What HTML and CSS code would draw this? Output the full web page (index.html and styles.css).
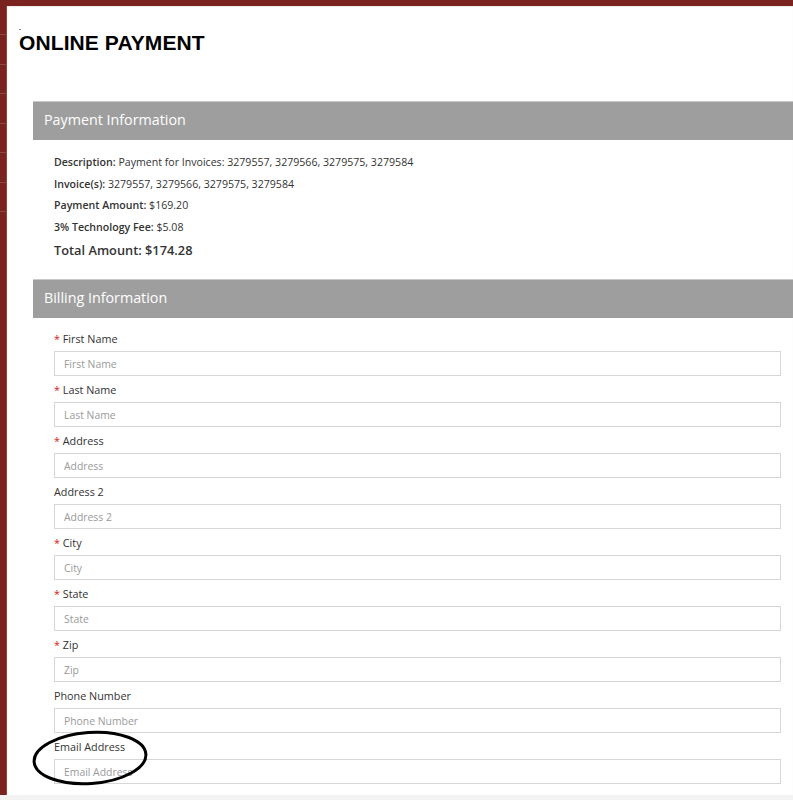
FILE: index.html
```html
<!DOCTYPE html>
<html>
<head>
<meta charset="utf-8">
<link rel="stylesheet" href="styles.css">
</head>
<body>
<div class="page">
  <div class="side"></div>
  <div class="main">
    <div class="mark"></div>
    <h1 class="title">ONLINE PAYMENT</h1>

    <div class="bar">Payment Information</div>
    <div class="info">
      <div class="line"><b>Description:</b> Payment for Invoices: 3279557, 3279566, 3279575, 3279584</div>
      <div class="line"><b>Invoice(s):</b> 3279557, 3279566, 3279575, 3279584</div>
      <div class="line"><b>Payment Amount:</b> $169.20</div>
      <div class="line"><b>3% Technology Fee:</b> $5.08</div>
      <div class="total">Total Amount: $174.28</div>
    </div>

    <div class="bar">Billing Information</div>
    <form class="form">
      <div class="field"><label class="label"><span class="req">*</span> First Name</label><input class="input" placeholder="First Name"></div>
      <div class="field"><label class="label"><span class="req">*</span> Last Name</label><input class="input" placeholder="Last Name"></div>
      <div class="field"><label class="label"><span class="req">*</span> Address</label><input class="input" placeholder="Address"></div>
      <div class="field"><label class="label">Address 2</label><input class="input" placeholder="Address 2"></div>
      <div class="field"><label class="label"><span class="req">*</span> City</label><input class="input" placeholder="City"></div>
      <div class="field"><label class="label"><span class="req">*</span> State</label><input class="input" placeholder="State"></div>
      <div class="field"><label class="label"><span class="req">*</span> Zip</label><input class="input" placeholder="Zip"></div>
      <div class="field"><label class="label">Phone Number</label><input class="input" placeholder="Phone Number"></div>
      <div class="field"><label class="label">Email Address</label><input class="input" placeholder="Email Address"></div>
    </form>
  </div>
</div>
<svg class="circle" width="130" height="64" viewBox="0 0 130 64">
  <ellipse cx="65" cy="32" rx="56" ry="25.5" fill="none" stroke="#000" stroke-width="3" transform="rotate(-4 65 32)"/>
</svg>
</body>
</html>
```

FILE: styles.css
```css
html, body {
  margin: 0;
  padding: 0;
}
body {
  background: #f3f3f3;
  width: 793px;
  height: 800px;
  overflow: hidden;
  position: relative;
}
.page {
  display: flex;
  height: 789px;
  border-top: 6px solid #7b2320;
}
.side {
  width: 7px;
  flex: none;
  background-color: #7b2320;
  background-image: repeating-linear-gradient(to bottom, transparent 0, transparent 28.5px, rgba(255,255,255,0.16) 28.5px, rgba(255,255,255,0.16) 29.5px);
  background-size: 7px 208px;
  background-repeat: no-repeat;
  border-right: 1px solid #8e4444;
  box-sizing: border-box;
}
.main {
  flex: 1;
  background: #fff;
  padding-top: 23px;
  overflow: hidden;
  box-shadow: inset 0 1px 1px rgba(0,0,0,0.08);
}
.mark {
  width: 2px;
  height: 1px;
  background: #888;
  margin-left: 12px;
  margin-bottom: 1px;
}
.title {
  margin: 0 0 47px 12px;
  font-family: "Liberation Sans", Arial, sans-serif;
  font-weight: bold;
  font-size: 21px;
  letter-spacing: 0.1px;
  line-height: 23px;
  color: #000;
}
.bar {
  margin-left: 26px;
  height: 39px;
  line-height: 36px;
  background: #9e9e9e;
  color: #fff;
  font-family: "Open Sans", sans-serif;
  font-size: 14.3px;
  padding-left: 11px;
  border-top: 1px solid #c8c8c8;
  box-sizing: border-box;
}
.info {
  padding: 12px 0 17px 47px;
  font-family: "Open Sans", sans-serif;
  font-size: 10.6px;
  color: #333;
}
.line {
  line-height: 21.5px;
}
.line b {
  font-weight: 600;
}
.total {
  line-height: 24px;
  font-size: 12.8px;
  font-weight: 600;
  margin-top: 0;
}
.form {
  margin: 0;
  padding: 13px 12px 0 47px;
  font-family: "Open Sans", sans-serif;
}
.field {
  display: flex;
  flex-direction: column;
  gap: 4px;
  margin-bottom: 6px;
}
.label {
  font-size: 10.8px;
  line-height: 16px;
  color: #333;
}
.req {
  color: #d0201c;
}
.input {
  height: 25px;
  box-sizing: border-box;
  border: 1px solid #d6d6d6;
  border-radius: 0;
  padding: 0 9px;
  font-family: "Open Sans", sans-serif;
  font-size: 10.4px;
  color: #333;
  background: #fff;
  outline: none;
  margin: 0;
}
.input::placeholder {
  color: #9a9a9a;
}
.circle {
  position: absolute;
  left: 25px;
  top: 726px;
}
```
